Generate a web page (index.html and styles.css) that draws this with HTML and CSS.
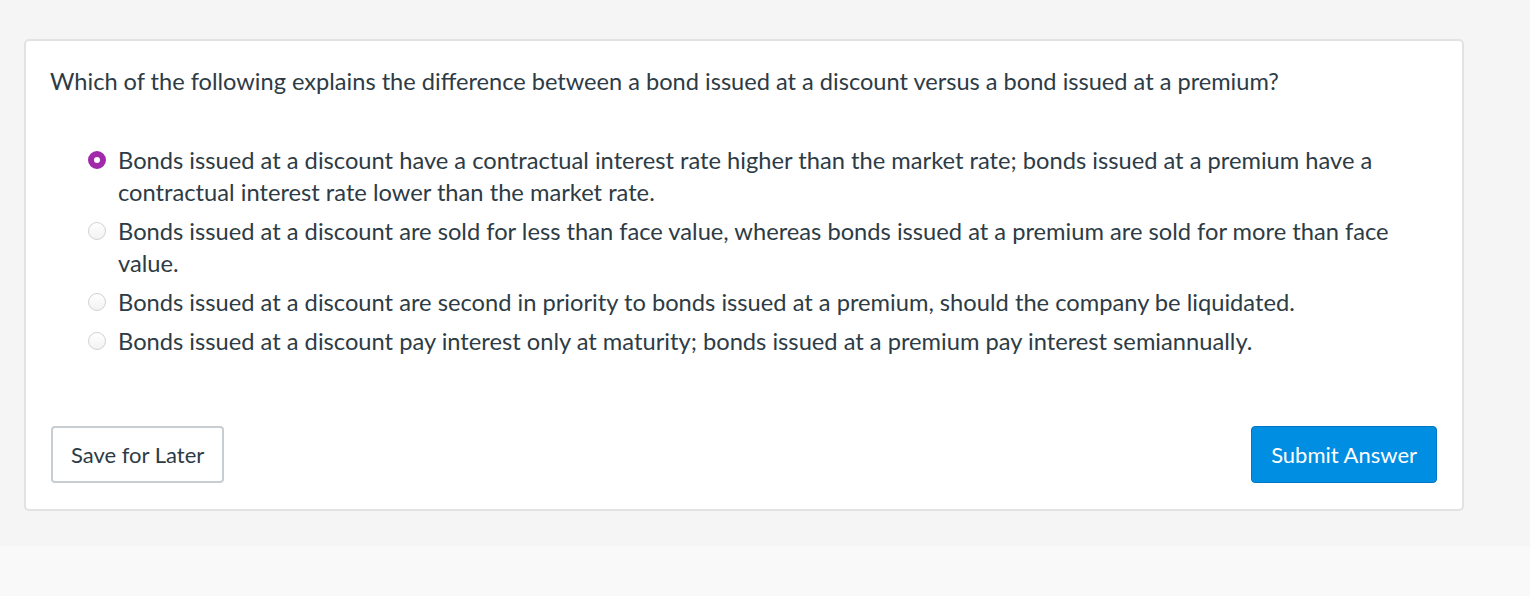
FILE: index.html
```html
<!DOCTYPE html>
<html>
<head>
<meta charset="utf-8">
<link rel="stylesheet" href="styles.css">
</head>
<body>
<div class="page">
  <div class="card">
    <p class="question">Which of the following explains the difference between a bond issued at a discount versus a bond issued at a premium?</p>
    <ul class="options">
      <li class="option"><span class="radio checked"></span><span class="label">Bonds issued at a discount have a contractual interest rate higher than the market rate; bonds issued at a premium have a contractual interest rate lower than the market rate.</span></li>
      <li class="option"><span class="radio"></span><span class="label">Bonds issued at a discount are sold for less than face value, whereas bonds issued at a premium are sold for more than face value.</span></li>
      <li class="option"><span class="radio"></span><span class="label">Bonds issued at a discount are second in priority to bonds issued at a premium, should the company be liquidated.</span></li>
      <li class="option"><span class="radio"></span><span class="label">Bonds issued at a discount pay interest only at maturity; bonds issued at a premium pay interest semiannually.</span></li>
    </ul>
    <div class="actions">
      <button class="btn btn-secondary">Save for Later</button>
      <button class="btn btn-primary">Submit Answer</button>
    </div>
  </div>
</div>
</body>
</html>
```
FILE: styles.css
```css
html, body {
  margin: 0;
  padding: 0;
}
body {
  background: #f9f9f9;
  font-family: Lato, "Liberation Sans", sans-serif;
  color: #2d3b45;
}
.page {
  background: #f5f5f5;
  height: 546px;
  padding: 39px 0 0 24px;
  box-sizing: border-box;
}
.card {
  width: 1440px;
  height: 472px;
  box-sizing: border-box;
  background: #fff;
  border: 2px solid #e2e2e2;
  border-radius: 5px;
  padding: 24px 24px 0 24px;
}
.question {
  margin: 0;
  font-size: 23.6px;
  line-height: 32px;
}
.options {
  list-style: none;
  margin: 47px 0 0 0;
  padding: 0;
}
.option {
  display: flex;
  align-items: flex-start;
  font-size: 23.7px;
  line-height: 32px;
  margin-bottom: 7px;
}
.label {
  width: 1290px;
}
.radio {
  flex: none;
  width: 18px;
  height: 18px;
  margin: 7px 12px 0 38px;
  border-radius: 50%;
  box-sizing: border-box;
  border: 1px solid #d2d2d2;
  background: linear-gradient(#fff, #f2f2f2);
}
.radio.checked {
  border: 6px solid #a02aa9;
  background: #fff;
}
.actions {
  display: flex;
  justify-content: space-between;
  margin-top: 69px;
  padding-left: 1px;
  padding-right: 1px;
}
.btn {
  font-family: Lato, "Liberation Sans", sans-serif;
  font-size: 22px;
  height: 57px;
  border-radius: 4px;
  cursor: pointer;
}
.btn-secondary {
  padding: 0 18px;
  background: #fff;
  border: 2px solid #c7cdd1;
  color: #2d3b45;
}
.btn-primary {
  padding: 0 19px;
  background: #008ee2;
  border: 1px solid #0077c2;
  color: #fff;
}
```
